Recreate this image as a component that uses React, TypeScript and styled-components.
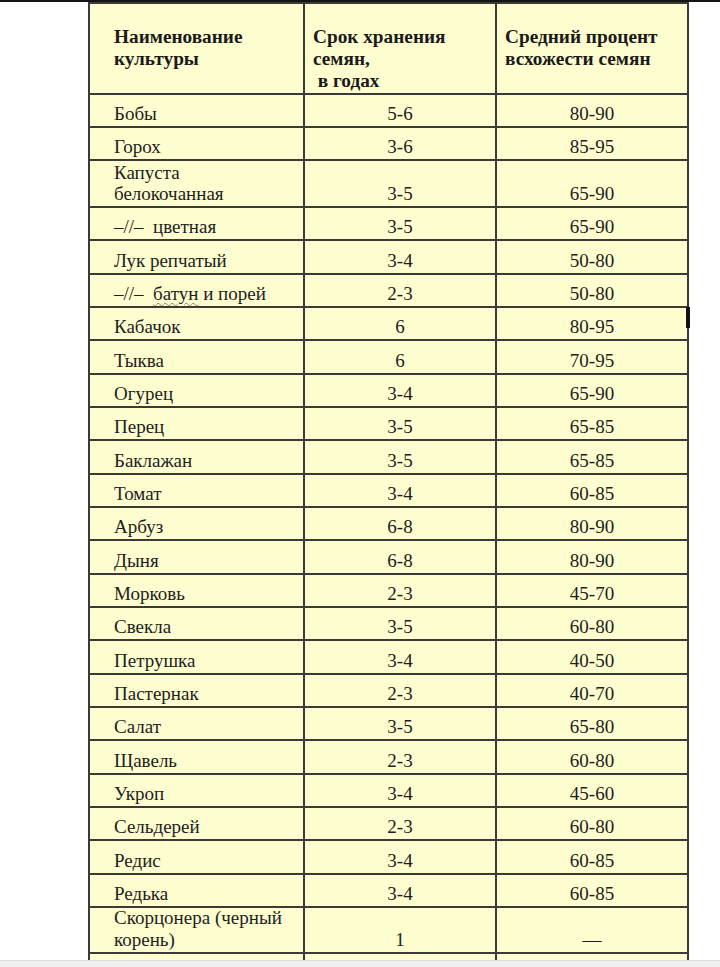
import React from "react";
import styled, { createGlobalStyle } from "styled-components";

const GlobalStyle = createGlobalStyle`
  html, body {
    margin: 0;
    padding: 0;
    background: #ffffff;
  }
  body {
    font-family: "Liberation Serif", "Times New Roman", serif;
    color: #1e1e1e;
  }
`;

const Page = styled.div`
  position: relative;
  min-height: 967px;
  font-family: "Liberation Serif", "Times New Roman", serif;
`;

const TopRule = styled.div`
  height: 2px;
  background: #141414;
`;

const Sheet = styled.div`
  padding-left: 88px;
`;

const Grid = styled.div`
  display: inline-grid;
  grid-template-columns: 213px 190px 190px;
  grid-template-rows: 89px 31px 31px 45px repeat(21, 31.333px) 44px 31.333px;
  gap: 2px;
  padding: 2px;
  background: #3a3a36;
`;

const HeadCell = styled.div<{ $first?: boolean }>`
  background: #fdfdcf;
  padding: 22px 4px 0 ${(p) => (p.$first ? "24px" : "8px")};
  font-family: "Liberation Serif", "Times New Roman", serif;
  font-weight: bold;
  font-size: 19.3px;
  line-height: 22px;
  color: #1a1a1a;
  white-space: nowrap;
`;

const Cell = styled.div<{ $align: "left" | "center" }>`
  background: #fdfdcf;
  display: flex;
  flex-direction: column;
  justify-content: flex-end;
  align-items: ${(p) => (p.$align === "left" ? "flex-start" : "center")};
  text-align: ${(p) => p.$align};
  padding: 0 4px 1.5px ${(p) => (p.$align === "left" ? "24px" : "4px")};
  font-family: "Liberation Serif", "Times New Roman", serif;
  font-size: 19px;
  line-height: 21.5px;
  color: #1e1e1e;
  white-space: nowrap;
`;

const Squiggle = styled.span`
  text-decoration: underline wavy #8a8a6a;
  text-decoration-thickness: 1px;
  text-underline-offset: 2px;
`;

const SideMark = styled.div`
  position: absolute;
  left: 686px;
  top: 307px;
  width: 4px;
  height: 21px;
  background: #121212;
`;

const BottomBar = styled.div`
  position: fixed;
  left: 0;
  right: 0;
  bottom: 0;
  height: 6px;
  background: #efefef;
  border-top: 1px solid #dcdcdc;
`;

type Row = { name: React.ReactNode; years: string; pct: string };

const ditto = "\u2013//\u2013\u00a0 ";

const rows: Row[] = [
  { name: "Бобы", years: "5-6", pct: "80-90" },
  { name: "Горох", years: "3-6", pct: "85-95" },
  {
    name: (
      <>
        Капуста
        <br />
        белокочанная
      </>
    ),
    years: "3-5",
    pct: "65-90",
  },
  { name: ditto + "цветная", years: "3-5", pct: "65-90" },
  { name: "Лук репчатый", years: "3-4", pct: "50-80" },
  {
    name: (
      <span>
        {ditto}
        <Squiggle>батун</Squiggle> и порей
      </span>
    ),
    years: "2-3",
    pct: "50-80",
  },
  { name: "Кабачок", years: "6", pct: "80-95" },
  { name: "Тыква", years: "6", pct: "70-95" },
  { name: "Огурец", years: "3-4", pct: "65-90" },
  { name: "Перец", years: "3-5", pct: "65-85" },
  { name: "Баклажан", years: "3-5", pct: "65-85" },
  { name: "Томат", years: "3-4", pct: "60-85" },
  { name: "Арбуз", years: "6-8", pct: "80-90" },
  { name: "Дыня", years: "6-8", pct: "80-90" },
  { name: "Морковь", years: "2-3", pct: "45-70" },
  { name: "Свекла", years: "3-5", pct: "60-80" },
  { name: "Петрушка", years: "3-4", pct: "40-50" },
  { name: "Пастернак", years: "2-3", pct: "40-70" },
  { name: "Салат", years: "3-5", pct: "65-80" },
  { name: "Щавель", years: "2-3", pct: "60-80" },
  { name: "Укроп", years: "3-4", pct: "45-60" },
  { name: "Сельдерей", years: "2-3", pct: "60-80" },
  { name: "Редис", years: "3-4", pct: "60-85" },
  { name: "Редька", years: "3-4", pct: "60-85" },
  {
    name: (
      <>
        Скорцонера (черный
        <br />
        корень)
      </>
    ),
    years: "1",
    pct: "\u2014",
  },
  { name: "", years: "", pct: "" },
];

export default function App() {
  return (
    <Page>
      <GlobalStyle />
      <TopRule />
      <Sheet>
        <Grid>
          <HeadCell $first>
            Наименование
            <br />
            культуры
          </HeadCell>
          <HeadCell>
            Срок хранения
            <br />
            семян,
            <br />
            {"\u00a0в годах"}
          </HeadCell>
          <HeadCell>
            Средний процент
            <br />
            всхожести семян
          </HeadCell>
          {rows.map((r, i) => (
            <React.Fragment key={i}>
              <Cell $align="left">
                <div>{r.name}</div>
              </Cell>
              <Cell $align="center">{r.years}</Cell>
              <Cell $align="center">{r.pct}</Cell>
            </React.Fragment>
          ))}
        </Grid>
      </Sheet>
      <SideMark />
      <BottomBar />
    </Page>
  );
}
